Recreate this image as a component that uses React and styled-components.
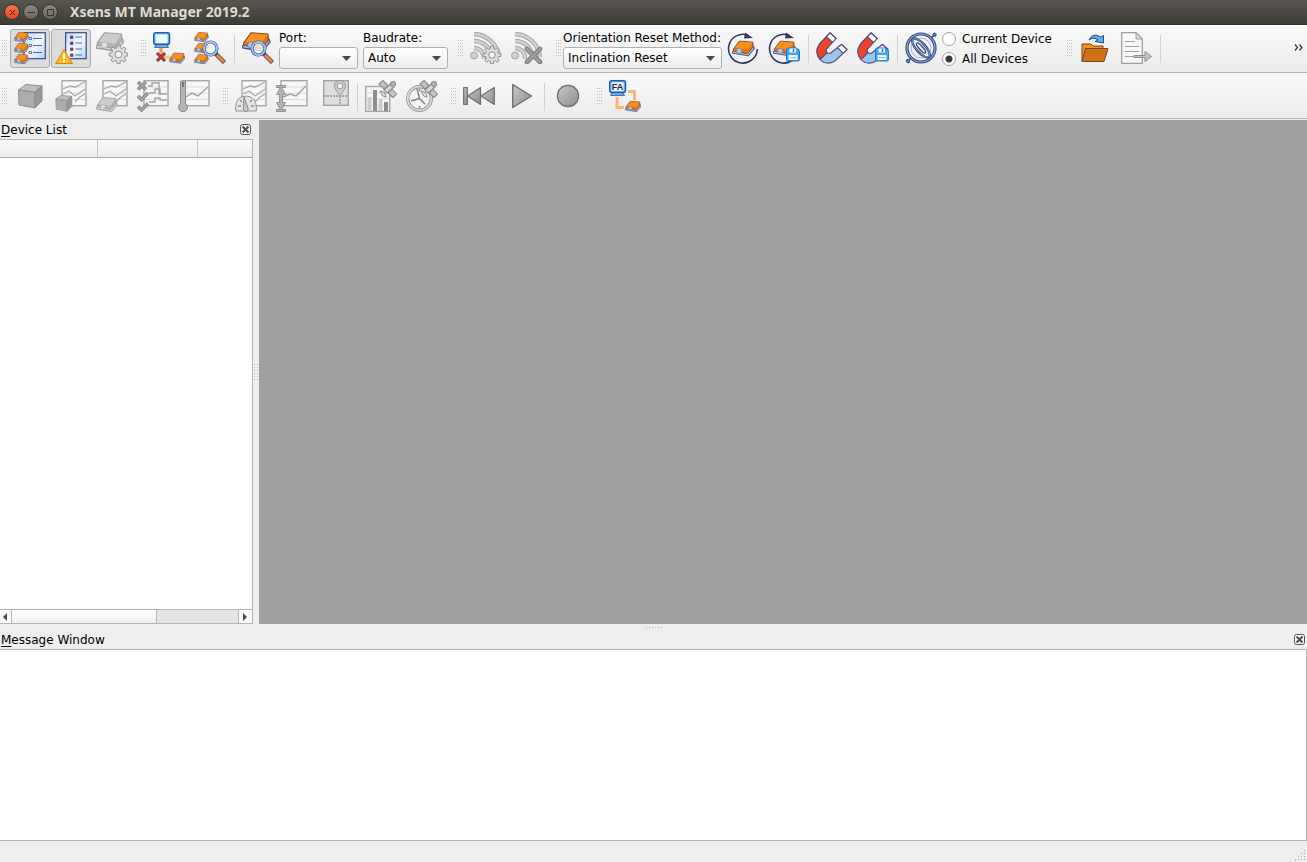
import React, { useState } from "react";
import styled, { createGlobalStyle, css } from "styled-components";

/* ---------- icon parts ---------- */

const COLOR = {
  top: "#f98f1d",
  front: "#de7612",
  base: "#a9cbf3",
  line: "#4a5590",
  edge: "#7d4a30",
};
const GREY = {
  top: "#cdcdcd",
  front: "#b4b4b4",
  base: "#dcdcdc",
  line: "#9c9c9c",
  edge: "#9a9a9a",
};

const Device = ({ x = 0, y = 0, s = 1, off }) => {
  const c = off ? GREY : COLOR;
  return (
    <g transform={`translate(${x} ${y}) scale(${s})`} strokeLinejoin="round">
      <path d="M0.5 14L4 11 27 7 28 10 20.500 19 1 16Z" fill={c.base} stroke={c.line} strokeWidth="1.3" />
      <path d="M1.5 11L9 0.8 26 2 26.5 8 19.5 16.500 2.500 13.500Z" fill={c.front} stroke={c.edge} strokeWidth="1.1" />
      <path d="M3.500 9.500L9.500 1.500 25.500 2.600 19.500 11.500Z" fill={c.top} />
      <circle cx="9" cy="13" r="3.2" fill={c.base} stroke={c.line} strokeWidth="0.5" />
    </g>
  );
};

const gearPath = (cx, cy, outer, inner, teeth = 8) => {
  const pts = [];
  const step = (Math.PI * 2) / teeth;
  for (let i = 0; i < teeth; i++) {
    [
      [-0.3, inner],
      [-0.2, outer],
      [0.2, outer],
      [0.3, inner],
    ].forEach(([o, r]) => {
      const a = (i + o) * step - Math.PI / 2;
      pts.push(`${(cx + r * Math.cos(a)).toFixed(2)} ${(cy + r * Math.sin(a)).toFixed(2)}`);
    });
  }
  return `M${pts.join("L")}Z`;
};

const Gear = ({ cx, cy, r }) => (
  <>
    <path d={gearPath(cx, cy, r, r * 0.74)} fill="#dedede" stroke="#8f8f8f" strokeLinejoin="round" />
    <circle cx={cx} cy={cy} r={r * 0.36} fill="#f5f5f5" stroke="#8f8f8f" />
  </>
);

const Magnifier = () => (
  <>
    <path d="M21.5 21.5L30.5 30.5" stroke="#3d4680" strokeWidth="4.4" />
    <path d="M23 23L30 30" stroke="#f58a1f" strokeWidth="2.6" />
    <circle cx="16.5" cy="16.5" r="6.5" fill="#ffffff" fillOpacity="0.75" stroke="#3f5a9c" strokeWidth="3.2" />
    <circle cx="16.5" cy="16.5" r="6.5" fill="none" stroke="#9cc4f2" strokeWidth="1.8" />
  </>
);

const Frame = ({ x = 7, y = 0.7, w = 24, h = 25 }) => (
  <>
    <rect x={x} y={y} width={w} height={h} fill="#f7f7f7" stroke="#a6a6a6" strokeWidth="1.4" />
    <path
      d={`M${x + 1} ${y + h * 0.25}h${w - 2}M${x + 1} ${y + h * 0.5}h${w - 2}M${x + 1} ${y + h * 0.75}h${w - 2}`}
      stroke="#dadada"
    />
  </>
);

const Curves = () => (
  <path
    d="M8 9L15 6 20 7 30 2M8 14L14 11 20 16 30 9M20 22L25 17 30 14"
    fill="none"
    stroke="#a8a8a8"
    strokeWidth="1.3"
  />
);

const Cube = ({ x = 0, y = 0, s = 1 }) => (
  <g transform={`translate(${x} ${y}) scale(${s})`} stroke="#8c8c8c" strokeLinejoin="round">
    <path d="M0.5 6L17 8V24L1 21Z" fill="#acacac" />
    <path d="M0.5 6L8 0.5 24 2 17 8Z" fill="#bfbfbf" />
    <path d="M17 8L24 2V17L17 24Z" fill="#989898" />
  </g>
);

const Floppy = () => (
  <g strokeLinejoin="round">
    <path d="M18.5 17.5Q18.5 16 20 16H28.5L31.5 19V27.5Q31.5 29 30 29H20Q18.5 29 18.5 27.5Z" fill="#42a5f2" stroke="#1c78cf" />
    <path d="M21.5 16.5H28V20.5H21.5ZM20.5 23H29.5V28H20.5Z" fill="#f0f8ff" />
    <path d="M25.5 17V20" stroke="#1c78cf" strokeWidth="1.5" />
    <path d="M22 25.5H28" stroke="#8fbbe2" />
  </g>
);

const ResetRing = () => (
  <>
    <path d="M21 3.2A14.4 14.4 0 1 0 30.3 17" fill="none" stroke="#343766" strokeWidth="1.6" />
    <path d="M18 0.5L26 6 17 6.5Z" fill="#343766" />
  </>
);

const Magnet = () => (
  <g strokeLinejoin="round" stroke="#56507e" strokeWidth="1.1">
    <path d="M14 1L20 6.5 10.5 17Q9.5 21.5 14 21.5L25.5 12.5 31 17.5 19 29Q10 34 4 27.5 -2 20 3.5 12Z" fill="#9cc6ef" />
    <path d="M14 1L20 6.5 10.5 17Q9.5 20 10.8 21L4 27.5Q-2 20 3.5 12Z" fill="#ee4427" />
    <path d="M14 1L20 6.5 16.5 10.5 10.5 4.7Z" fill="#ffffff" />
    <path d="M25.5 12.5L31 17.5 27 21.3 21.5 15.5Z" fill="#ffffff" />
  </g>
);

const Satellite = () => (
  <g stroke="#8e8e8e" strokeWidth="1.1" strokeLinejoin="round">
    <path d="M14 4L18 0.5 23 5.5 19 9Z" fill="#c4c4c4" />
    <path d="M23 13L27 9 31.5 14 28 17.5Z" fill="#c4c4c4" />
    <path d="M19 10L26 3.5 29 7 22 13Z" fill="#d8d8d8" />
    <circle cx="28" cy="4" r="2.5" fill="#b5b5b5" />
    <path d="M15 11Q20 11 21 17L18 16Z" fill="#eeeeee" />
  </g>
);

const WAVE_PATH = "M4 2A26 26 0 0 1 29 25M4 9A18 18 0 0 1 22 26M4 16A10 10 0 0 1 14 27";

const Waves = () => (
  <>
    <path d={WAVE_PATH} fill="none" stroke="#a6a6a6" strokeWidth="4.4" />
    <path d={WAVE_PATH} fill="none" stroke="#d0d0d0" strokeWidth="2.6" />
    <circle cx="4" cy="23.5" r="3.5" fill="#cfcfcf" stroke="#a3a3a3" />
  </>
);

const Monitor = ({ label }) => (
  <g strokeLinejoin="round">
    <path d="M4 12L1.5 15.3H15.5L13 12Z" fill="#8cc3f7" stroke="#24599f" />
    <rect x="0.6" y="0.6" width="16" height="12" rx="2" fill="#58aaf5" stroke="#24599f" strokeWidth="1.2" />
    <rect x="2.5" y="2.2" width="12.2" height="8.8" rx="1" fill="#eff7ff" />
    {label && (
      <text x="8.6" y="9.7" textAnchor="middle" fontFamily="Liberation Sans, sans-serif" fontWeight="700" fontSize="9" fill="#1d2450">
        {label}
      </text>
    )}
  </g>
);

const DocPage = ({ x, w, children }) => (
  <>
    <defs>
      <linearGradient id={`doc${x}`} x1="0" y1="0" x2="1" y2="1">
        <stop offset="0" stopColor="#b9d5f5" />
        <stop offset="0.5" stopColor="#f4f9ff" />
        <stop offset="1" stopColor="#b4d2f4" />
      </linearGradient>
    </defs>
    <rect x={x} y="0.7" width={w} height="26" fill={`url(#doc${x})`} stroke="#3c4a86" strokeWidth="1.2" />
    {children}
  </>
);

const Metal = ({ id }) => (
  <defs>
    <linearGradient id={id} x1="0" y1="0" x2="1" y2="1">
      <stop offset="0" stopColor="#c9c9c9" />
      <stop offset="1" stopColor="#8d8d8d" />
    </linearGradient>
  </defs>
);

const ICONS = {
  deviceList: (
    <>
      <DocPage x={10} w={21.3}>
        <path d="M19 6.5H28M19 13.5H28M19 20.5H28" stroke="#5a6699" strokeWidth="1.2" />
        <path d="M15 5.5h2.5v2h-2.5zM15 12.5h2.5v2h-2.5zM15 19.5h2.5v2h-2.5z" fill="#ffffff" stroke="#3c4a86" strokeWidth="0.8" />
      </DocPage>
      <Device x={0} y={0} s={0.52} />
      <Device x={0} y={11} s={0.52} />
      <Device x={0} y={22} s={0.52} />
    </>
  ),
  messages: (
    <>
      <DocPage x={10.6} w={20.6}>
        <path d="M20.5 5H27M20.5 11H27M20.5 17H27M20.5 23H27" stroke="#5a6699" strokeWidth="1.2" />
        <path d="M15.5 4h2.4v2.4h-2.4zM15.5 10h2.4v2.4h-2.4zM15.5 16h2.4v2.4h-2.4zM15.5 22h2.4v2.4h-2.4z" fill="#b03a4a" stroke="#4a3a66" strokeWidth="0.8" />
      </DocPage>
      <path d="M9 17.5L17.5 31.5H0.5Z" fill="#fbb829" stroke="#d48a12" strokeLinejoin="round" />
      <path d="M9 21.5V27M9 28.3V30.2" stroke="#ffffff" strokeWidth="2" />
    </>
  ),
  deviceSettings: (
    <>
      <Device x={-0.5} y={0} s={1} off />
      <Gear cx={22.5} cy={22.5} r={9.4} />
    </>
  ),
  disconnect: (
    <>
      <Monitor />
      <path d="M8 16V25H17" fill="none" stroke="#fbc08a" strokeWidth="3" />
      <path d="M8 16V20" stroke="#f79a45" strokeWidth="3" />
      <Device x={16} y={20.5} s={0.57} />
      <path d="M4 21L12 29M12 21L4 29" stroke="#6a2430" strokeWidth="3" />
      <path d="M4.5 21.5L11.5 28.5M11.5 21.5L4.5 28.5" stroke="#d23a2a" strokeWidth="1.6" />
    </>
  ),
  scanAll: (
    <>
      <Device x={0} y={0} s={0.52} />
      <Device x={0} y={11} s={0.52} />
      <Device x={0} y={22} s={0.52} />
      <Magnifier />
    </>
  ),
  scanPort: (
    <>
      <Device x={0} y={0} s={1} />
      <Magnifier />
    </>
  ),
  wirelessSettings: (
    <>
      <Waves />
      <Gear cx={22} cy={23} r={9} />
    </>
  ),
  wirelessOff: (
    <>
      <Waves />
      <path d="M16 17L29 30M29 17L16 30" stroke="#7e7e7e" strokeWidth="4.6" strokeLinecap="round" />
      <path d="M16 17L29 30M29 17L16 30" stroke="#9b9b9b" strokeWidth="2.8" strokeLinecap="round" />
    </>
  ),
  reset: (
    <>
      <ResetRing />
      <Device x={5} y={8.5} s={0.8} />
    </>
  ),
  resetSave: (
    <>
      <ResetRing />
      <Device x={5} y={8.5} s={0.8} />
      <Floppy />
    </>
  ),
  magnet: <Magnet />,
  magnetSave: (
    <>
      <Magnet />
      <Floppy />
    </>
  ),
  gyro: (
    <g fill="none" stroke="#35477f">
      <circle cx="16" cy="16" r="14" strokeWidth="3.2" />
      <circle cx="16" cy="16" r="14" stroke="#86abe0" strokeWidth="1.2" />
      <circle cx="16" cy="16" r="10" stroke="#8794b8" strokeWidth="0.7" />
      <ellipse cx="16" cy="16" rx="12" ry="4.6" transform="rotate(48 16 16)" fill="#f4f6fa" strokeWidth="2.4" />
      <ellipse cx="16" cy="16" rx="12" ry="4.6" transform="rotate(48 16 16)" stroke="#86abe0" strokeWidth="0.7" />
      <ellipse cx="16" cy="16" rx="6.5" ry="1.8" transform="rotate(48 16 16)" strokeWidth="1.4" />
      <circle cx="29.5" cy="2.8" r="1.8" fill="#3c7cc4" strokeWidth="0.8" />
      <circle cx="3" cy="29" r="1.8" fill="#3c7cc4" strokeWidth="0.8" />
      <path d="M26 6L28.5 4M6 26L4 28" strokeWidth="1.6" />
    </g>
  ),
  open: (
    <g strokeLinejoin="round">
      <path d="M3 29V12H12L14 14H24V29Z" fill="#f39122" stroke="#7b461d" />
      <path d="M3 29.5L6.5 16.5H29L25 29.5Z" fill="#cf7116" stroke="#7b461d" />
      <path d="M10 8Q14 0 21.5 5L24.5 3.5V11L16 9.5 19 8Q15 4.5 10 8Z" fill="#5cb0f5" stroke="#2c4775" />
    </g>
  ),
  exportFile: (
    <g strokeLinejoin="round">
      <path d="M1.7 0.7H16L22.3 7V31.3H1.7Z" fill="#f9f9f9" stroke="#a0a0a0" strokeWidth="1.3" />
      <path d="M16 0.7L22.3 7H16Z" fill="#dedede" stroke="#a0a0a0" />
      <path d="M5 9.5H15M5 14.5H19M5 19.5H19M5 24.5H15" stroke="#a0a0a0" strokeWidth="1.2" />
      <path d="M14 23.5H25V19.5L31.5 24.5 25 29.5V25.5H14Z" fill="#c4c4c4" stroke="#8f8f8f" />
    </g>
  ),
  view3d: <Cube x={4} y={4} />,
  orientation: (
    <>
      <Frame />
      <Curves />
      <Cube x={0.5} y={15} s={0.68} />
    </>
  ),
  inertial: (
    <>
      <Frame />
      <Curves />
      <Device x={0} y={17} s={0.76} off />
    </>
  ),
  status: (
    <>
      <Frame />
      <path d="M11 6H15V3H22V14H30M12 22H18V18H23V20H30M12 13H18V9H23V14" fill="none" stroke="#a3a3a3" strokeWidth="1.4" />
      <g fill="none">
        <path d="M1 2L9 9.5M9 2L1 9.5M1 16L4.5 19.5 11 13M1 26.5L4.5 30 11 23.5" stroke="#848484" strokeWidth="3.4" />
        <path d="M1 2L9 9.5M9 2L1 9.5M1 16L4.5 19.5 11 13M1 26.5L4.5 30 11 23.5" stroke="#a8a8a8" strokeWidth="1.6" />
      </g>
    </>
  ),
  temperature: (
    <>
      <Frame />
      <path d="M8 17L14 13 20 16 30 7" fill="none" stroke="#9f9f9f" strokeWidth="1.4" />
      <path d="M2.5 1.5Q5 -0.5 7.5 1.5V23.5A4.5 4.5 0 1 1 2.5 23.5Z" fill="#b4b4b4" stroke="#8a8a8a" />
      <path d="M5 2V7" stroke="#757575" strokeWidth="2" />
    </>
  ),
  pressure: (
    <>
      <Frame />
      <Curves />
      <path d="M0.7 31V27Q1 16.5 11 16 21 16.5 21.3 27V31Z" fill="#e6e6e6" stroke="#929292" strokeLinejoin="round" />
      <path d="M3 26H6M5 20L7 22M17 20L15 22M19 26H16" stroke="#888888" strokeWidth="1.3" />
      <path d="M9 17L13 28A2.5 2.5 0 1 1 8.5 28Z" fill="#c6c6c6" stroke="#888888" />
    </>
  ),
  altitude: (
    <>
      <Frame x={5} w={26} />
      <path d="M7 17L14 14 20 16 30 6" fill="none" stroke="#9f9f9f" strokeWidth="1.4" />
      <path
        d="M0.5 5.5H9.5V7.5H5.7L9.5 14.5H6.5V22.5H9.5L5.7 29.5H9.5V31.5H0.5V29.5H4.3L0.5 22.5H3.5V14.5H0.5L4.3 7.5H0.5Z"
        fill="#b4b4b4"
        stroke="#8a8a8a"
        strokeWidth="0.9"
      />
    </>
  ),
  position: (
    <>
      <rect x="6.7" y="0.7" width="24.6" height="24.6" fill="#dedede" stroke="#a2a2a2" strokeWidth="1.4" />
      <path d="M7 16H31M23 16V25" stroke="#8f8f8f" strokeWidth="1.3" strokeDasharray="2 1" />
      <path d="M23 15.5Q17.5 9 17.5 6A5.5 5.5 0 1 1 28.5 6Q28.5 9 23 15.5Z" fill="#cccccc" stroke="#999999" />
      <circle cx="23" cy="6" r="2.8" fill="#f2f2f2" stroke="#999999" />
    </>
  ),
  signal: (
    <>
      <Frame x={0.7} y={6.5} w={24} h={25} />
      <path d="M2.5 17H6.5V31H2.5ZM13.5 19H17.5V31H13.5Z" fill="#cdcdcd" />
      <path d="M8 10H12V31H8ZM19 22H23V31H19Z" fill="#8d8d8d" />
      <Satellite />
    </>
  ),
  timing: (
    <>
      <circle cx="13.5" cy="18.5" r="11.8" fill="#f5f5f5" stroke="#969696" strokeWidth="3.4" />
      <circle cx="13.5" cy="18.5" r="11.8" fill="none" stroke="#d8d8d8" strokeWidth="1.8" />
      <path d="M13.5 18.5L11 9M13.5 18.5L19 24M13.5 18.5L5 21M13.5 9V11M13.5 26V28" stroke="#858585" strokeWidth="1.5" />
      <Satellite />
    </>
  ),
  rewind: (
    <g fill="url(#metalRewind)" stroke="#6c6c6c" strokeWidth="1.2" strokeLinejoin="round">
      <Metal id="metalRewind" />
      <path d="M0.7 7.5H4.3V24.5H0.7Z" />
      <path d="M17.5 7.5V24.5L4.8 16Z" />
      <path d="M31.3 7.5V24.5L18 16Z" />
    </g>
  ),
  play: (
    <g fill="url(#metalPlay)" stroke="#6c6c6c" strokeWidth="1.3" strokeLinejoin="round">
      <Metal id="metalPlay" />
      <path d="M8.7 4.5L27.5 16 8.7 27.5Z" />
    </g>
  ),
  record: (
    <g fill="url(#metalRecord)" stroke="#6c6c6c" strokeWidth="1.2">
      <Metal id="metalRecord" />
      <circle cx="16" cy="16" r="10.6" />
    </g>
  ),
  firmware: (
    <>
      <Monitor label="FA" />
      <path d="M19 11.5H25.5V20" fill="none" stroke="#fbb676" strokeWidth="3" />
      <path d="M8 17V27.5H15" fill="none" stroke="#fbb676" strokeWidth="3" />
      <Device x={16} y={20.8} s={0.57} />
    </>
  ),
};

const Icon = ({ name }) => (
  <svg width="32" height="32" viewBox="0 0 32 32" aria-hidden="true">
    {ICONS[name]}
  </svg>
);

/* ---------- small components ---------- */

const Tool = ({ name, label, checked, disabled }) => (
  <ToolButton type="button" title={label} aria-label={label} $checked={checked} disabled={disabled}>
    <Icon name={name} />
  </ToolButton>
);

const Field = ({ id, label, width, options }) => (
  <FieldBox>
    <label htmlFor={id}>{label}</label>
    <Combo $width={width}>
      <select id={id}>
        {options.map((o) => (
          <option key={o}>{o}</option>
        ))}
      </select>
      <svg width="9" height="5" viewBox="0 0 9 5" aria-hidden="true">
        <path d="M0 0H9L4.5 5Z" fill="#4a4a4a" />
      </svg>
    </Combo>
  </FieldBox>
);

const DockHeader = ({ hotkey, rest, onClose }) => (
  <DockTitle>
    <h2>
      <u>{hotkey}</u>
      {rest}
    </h2>
    <CloseButton type="button" aria-label="Close" onClick={onClose}>
      <svg width="11" height="11" viewBox="0 0 11 11" aria-hidden="true">
        <rect x="0.5" y="0.5" width="10" height="10" rx="2" fill="#f6f6f6" stroke="#555555" />
        <path d="M2.5 2.5L8.5 8.5M8.5 2.5L2.5 8.5" stroke="#505050" strokeWidth="2" />
      </svg>
    </CloseButton>
  </DockTitle>
);

const App = () => {
  const [target, setTarget] = useState("all");
  const [showDevices, setShowDevices] = useState(true);
  const [showMessages, setShowMessages] = useState(true);

  return (
    <Window>
      <GlobalStyle />
      <TitleBar>
        <WindowButton type="button" aria-label="Close window" $close>
          <svg width="7" height="7" viewBox="0 0 7 7">
            <path d="M1 1L6 6M6 1L1 6" />
          </svg>
        </WindowButton>
        <WindowButton type="button" aria-label="Minimize">
          <svg width="7" height="7" viewBox="0 0 7 7">
            <path d="M0 3.5H7" />
          </svg>
        </WindowButton>
        <WindowButton type="button" aria-label="Maximize">
          <svg width="7" height="7" viewBox="0 0 7 7">
            <path d="M0.5 0.5H6.5V6.5H0.5Z" />
          </svg>
        </WindowButton>
        <h1>Xsens MT Manager 2019.2</h1>
      </TitleBar>

      <ToolBar $bottom={3}>
        <Group>
          <Tool name="deviceList" label="Device List" checked />
          <Tool name="messages" label="Message Window" checked />
          <Tool name="deviceSettings" label="Device Settings" disabled />
        </Group>
        <Group>
          <Tool name="disconnect" label="Disconnect" />
          <Tool name="scanAll" label="Scan All Ports" />
          <Separator />
          <Tool name="scanPort" label="Scan Port" />
          <Field id="port" label="Port:" width={79} options={[""]} />
          <FieldGap />
          <Field id="baudrate" label="Baudrate:" width={85} options={["Auto"]} />
        </Group>
        <Group>
          <Tool name="wirelessSettings" label="Wireless Settings" disabled />
          <Tool name="wirelessOff" label="Disable Wireless" disabled />
        </Group>
        <Group $tight>
          <Field id="reset" label="Orientation Reset Method:" width={159} options={["Inclination Reset"]} />
          <Tool name="reset" label="Reset Orientation" />
          <Tool name="resetSave" label="Store Orientation Reset" />
          <Separator />
          <Tool name="magnet" label="Magnetic Field Mapper" />
          <Tool name="magnetSave" label="Store Magnetic Field Map" />
          <Separator />
          <Tool name="gyro" label="Gyro Bias" />
          <RadioList role="radiogroup" aria-label="Target">
            <label>
              <input type="radio" name="target" checked={target === "current"} onChange={() => setTarget("current")} />
              Current Device
            </label>
            <label>
              <input type="radio" name="target" checked={target === "all"} onChange={() => setTarget("all")} />
              All Devices
            </label>
          </RadioList>
        </Group>
        <Group>
          <Tool name="open" label="Open File" />
          <Tool name="exportFile" label="Export" disabled />
          <Separator />
        </Group>
        <MoreButton type="button" aria-label="More tools">
          <svg width="9" height="7" viewBox="0 0 9 7">
            <path d="M1 0.5L3.5 3.5 1 6.5M5.5 0.5L8 3.5 5.5 6.5" fill="none" stroke="#333333" strokeWidth="1.2" />
          </svg>
        </MoreButton>
      </ToolBar>

      <ToolBar $bottom={2}>
        <Group>
          <Tool name="view3d" label="3D View" disabled />
          <Tool name="orientation" label="Orientation Data" disabled />
          <Tool name="inertial" label="Inertial Data" disabled />
          <Tool name="status" label="Status Data" disabled />
          <Tool name="temperature" label="Temperature Data" disabled />
        </Group>
        <Group>
          <Tool name="pressure" label="Pressure Data" disabled />
          <Tool name="altitude" label="Altitude Data" disabled />
          <Tool name="position" label="Position Data" disabled />
          <Separator />
          <Tool name="signal" label="Satellite Signal" disabled />
          <Tool name="timing" label="Satellite Timing" disabled />
        </Group>
        <Group>
          <Tool name="rewind" label="Rewind" disabled />
          <Tool name="play" label="Play" disabled />
          <Separator />
          <Tool name="record" label="Record" disabled />
        </Group>
        <Group>
          <Tool name="firmware" label="Firmware Updater" />
        </Group>
      </ToolBar>

      <Workspace>
        {showDevices && (
          <>
            <DevicePanel>
              <DockHeader hotkey="D" rest="evice List" onClose={() => setShowDevices(false)} />
              <ListView>
                <DeviceTable aria-label="Device List">
                  <colgroup>
                    <col width="98" />
                    <col width="100" />
                    <col />
                  </colgroup>
                  <thead>
                    <tr>
                      <th />
                      <th />
                      <th />
                    </tr>
                  </thead>
                </DeviceTable>
                <ScrollBar>
                  <button type="button" aria-label="Scroll left">
                    <svg width="5" height="8" viewBox="0 0 5 8">
                      <path d="M4 0V8L0 4Z" />
                    </svg>
                  </button>
                  <Track>
                    <Thumb />
                  </Track>
                  <button type="button" aria-label="Scroll right">
                    <svg width="5" height="8" viewBox="0 0 5 8">
                      <path d="M0 0V8L4 4Z" />
                    </svg>
                  </button>
                </ScrollBar>
              </ListView>
            </DevicePanel>
            <Splitter>
              <Dots $cols={2} $rows={6} />
            </Splitter>
          </>
        )}
        <MdiArea />
      </Workspace>

      {showMessages && (
        <MessagePanel>
          <Splitter>
            <Dots $cols={6} $rows={1} />
          </Splitter>
          <DockHeader hotkey="M" rest="essage Window" onClose={() => setShowMessages(false)} />
          <MessageBox readOnly aria-label="Message Window" />
        </MessagePanel>
      )}

      <StatusBar>
        <svg width="11" height="11" viewBox="0 0 11 11" aria-hidden="true">
          <path
            d="M9 0h1v1h-1zM6 3h1v1h-1zM9 3h1v1h-1zM3 6h1v1h-1zM6 6h1v1h-1zM9 6h1v1h-1zM0 9h1v1h-1zM3 9h1v1h-1zM6 9h1v1h-1zM9 9h1v1h-1z"
            fill="#a8a8a8"
          />
        </svg>
      </StatusBar>
    </Window>
  );
};

/* ---------- styles ---------- */

const GlobalStyle = createGlobalStyle`
  * {
    box-sizing: border-box;
  }

  body {
    margin: 0;
    background: #eeeeee;
    color: #000000;
    font-family: "DejaVu Sans", sans-serif;
    font-size: 12px;
  }

  button,
  select,
  textarea {
    font: inherit;
    color: inherit;
  }

  h1,
  h2 {
    margin: 0;
  }
`;

const Window = styled.div`
  display: flex;
  flex-direction: column;
  height: 100vh;
  overflow: hidden;
`;

const TitleBar = styled.header`
  display: flex;
  align-items: center;
  flex: none;
  gap: 3px;
  height: 25px;
  padding: 0 4px;
  background: linear-gradient(#57554e, #3d3c38);
  border-bottom: 1px solid #33322f;

  h1 {
    margin-left: 9px;
    font-family: "Noto Sans", sans-serif;
    font-size: 14px;
    font-weight: 700;
    line-height: 20px;
    color: #dfdbd2;
  }
`;

const WindowButton = styled.button`
  display: flex;
  align-items: center;
  justify-content: center;
  width: 16px;
  height: 16px;
  padding: 0;
  border: 1px solid #35342f;
  border-radius: 50%;
  background: ${(p) => (p.$close ? "linear-gradient(#f4764f, #e2481c)" : "linear-gradient(#8a877d, #6a675f)")};

  svg {
    fill: none;
    stroke: ${(p) => (p.$close ? "#5a1c08" : "#34332e")};
    stroke-width: 1;
  }
`;

const ToolBar = styled.div`
  display: flex;
  align-items: flex-start;
  flex: none;
  padding: 4px 0 ${(p) => p.$bottom}px;
  background: linear-gradient(#f9f9f9, #ececec);
  border-bottom: 1px solid #b4b4b4;
`;

const Group = styled.div`
  display: flex;
  align-items: flex-start;

  /* drag handle */
  &::before {
    content: "";
    width: 5px;
    height: 16px;
    margin: 11px ${(p) => (p.$tight ? 1 : 3)}px 0 9px;
    background: conic-gradient(from 270deg at 1px 1px, #c2c2c2 90deg, transparent 0) 0 0 / 2px 3px;
  }

  &:first-child::before {
    margin-left: 2px;
  }
`;

const ToolButton = styled.button`
  display: block;
  flex: none;
  width: 40px;
  height: 39px;
  padding: 2px 3px 3px;
  border: 1px solid transparent;
  border-radius: 3px;
  background: none;

  button + & {
    margin-left: 1px;
  }

  svg {
    display: block;
  }

  ${(p) =>
    p.$checked &&
    css`
      border-color: #ababab;
      background: #dcdcdc;
    `}
`;

const Separator = styled.span`
  flex: none;
  width: 1px;
  height: 28px;
  margin: 6px 3px 0 4px;
  background: #d2d2d2;
`;

const FieldBox = styled.div`
  display: flex;
  flex-direction: column;
  margin: 0 1px;

  label {
    line-height: 18px;
    white-space: nowrap;
  }
`;

const FieldGap = styled.span`
  width: 3px;
`;

const Combo = styled.div`
  display: grid;
  align-items: center;
  width: ${(p) => p.$width}px;

  select,
  svg {
    grid-area: 1 / 1;
  }

  select {
    appearance: none;
    width: 100%;
    height: 22px;
    padding: 0 20px 0 4px;
    border: 1px solid #b0b0b0;
    border-radius: 3px;
    background: linear-gradient(#ffffff, #ededed);
  }

  svg {
    justify-self: end;
    margin-right: 7px;
    pointer-events: none;
  }
`;

const RadioList = styled.div`
  display: flex;
  flex-direction: column;
  padding: 0 6px 0 1px;

  label {
    display: flex;
    align-items: center;
    gap: 6px;
    height: 20px;
    white-space: nowrap;
  }

  input {
    appearance: none;
    width: 14px;
    height: 14px;
    margin: 0;
    border: 1px solid #a5a5a5;
    border-radius: 50%;
    background: #ffffff;
  }

  input:checked {
    background: radial-gradient(circle, #3a3a3a 3px, #ffffff 4px);
  }
`;

const MoreButton = styled.button`
  display: flex;
  margin: 15px 4px 0 auto;
  padding: 0;
  border: 0;
  background: none;
`;

const Workspace = styled.main`
  display: flex;
  flex: 1;
  min-height: 0;
  padding-top: 1px;
`;

const DevicePanel = styled.section`
  display: flex;
  flex-direction: column;
  flex: none;
  width: 253px;
`;

const DockTitle = styled.div`
  display: flex;
  align-items: center;
  justify-content: space-between;
  flex: none;
  height: 19px;
  padding: 0 2px 0 1px;

  h2 {
    font-size: 12px;
    font-weight: 400;
    line-height: 16px;
  }

  u {
    text-underline-offset: 2px;
  }
`;

const CloseButton = styled.button`
  display: flex;
  padding: 0;
  border: 0;
  background: none;
`;

const ListView = styled.div`
  display: flex;
  flex-direction: column;
  justify-content: space-between;
  flex: 1;
  border: 1px solid #b4b4b4;
  border-left: 0;
  background: #ffffff;
`;

const DeviceTable = styled.table`
  width: 100%;
  table-layout: fixed;
  border-collapse: separate;
  border-spacing: 0;

  th {
    height: 18px;
    padding: 0;
    border-right: 1px solid #c4c4c4;
    border-bottom: 1px solid #a8a8a8;
    background: linear-gradient(#fbfbfb, #ececec);
  }

  th:last-child {
    border-right: 0;
  }
`;

const ScrollBar = styled.div`
  display: flex;
  height: 14px;
  border-top: 1px solid #b4b4b4;

  button {
    display: flex;
    align-items: center;
    justify-content: center;
    width: 12px;
    padding: 0;
    border: 0;
    border-right: 1px solid #b4b4b4;
    background: #fafafa;
  }

  button:last-child {
    width: 14px;
    border-right: 0;
    border-left: 1px solid #b4b4b4;
  }

  path {
    fill: #4a4a4a;
  }
`;

const Track = styled.div`
  display: flex;
  flex: 1;
  background: #e4e4e4;
`;

const Thumb = styled.div`
  width: 64%;
  border-right: 1px solid #b4b4b4;
  background: linear-gradient(#ffffff, #f1f1f1);
`;

const Splitter = styled.div`
  display: flex;
  align-items: center;
  justify-content: center;
  flex: none;
  min-width: 6px;
  min-height: 6px;
`;

const Dots = styled.span`
  width: ${(p) => p.$cols * 3 - 2}px;
  height: ${(p) => p.$rows * 3 - 2}px;
  background: conic-gradient(from 270deg at 1px 1px, #b9b9b9 90deg, transparent 0) 0 0 / 3px 3px;
`;

const MdiArea = styled.div`
  flex: 1;
  background: #9f9f9f;
`;

const MessagePanel = styled.section`
  display: flex;
  flex-direction: column;
  flex: none;
`;

const MessageBox = styled.textarea`
  display: block;
  width: 100%;
  height: 192px;
  padding: 2px 4px;
  border: 1px solid #b4b4b4;
  border-left: 0;
  outline: 0;
  background: #ffffff;
  resize: none;
`;

const StatusBar = styled.footer`
  display: flex;
  align-items: flex-end;
  justify-content: flex-end;
  flex: none;
  height: 21px;
  padding: 0 1px 1px;
`;

export default App;
